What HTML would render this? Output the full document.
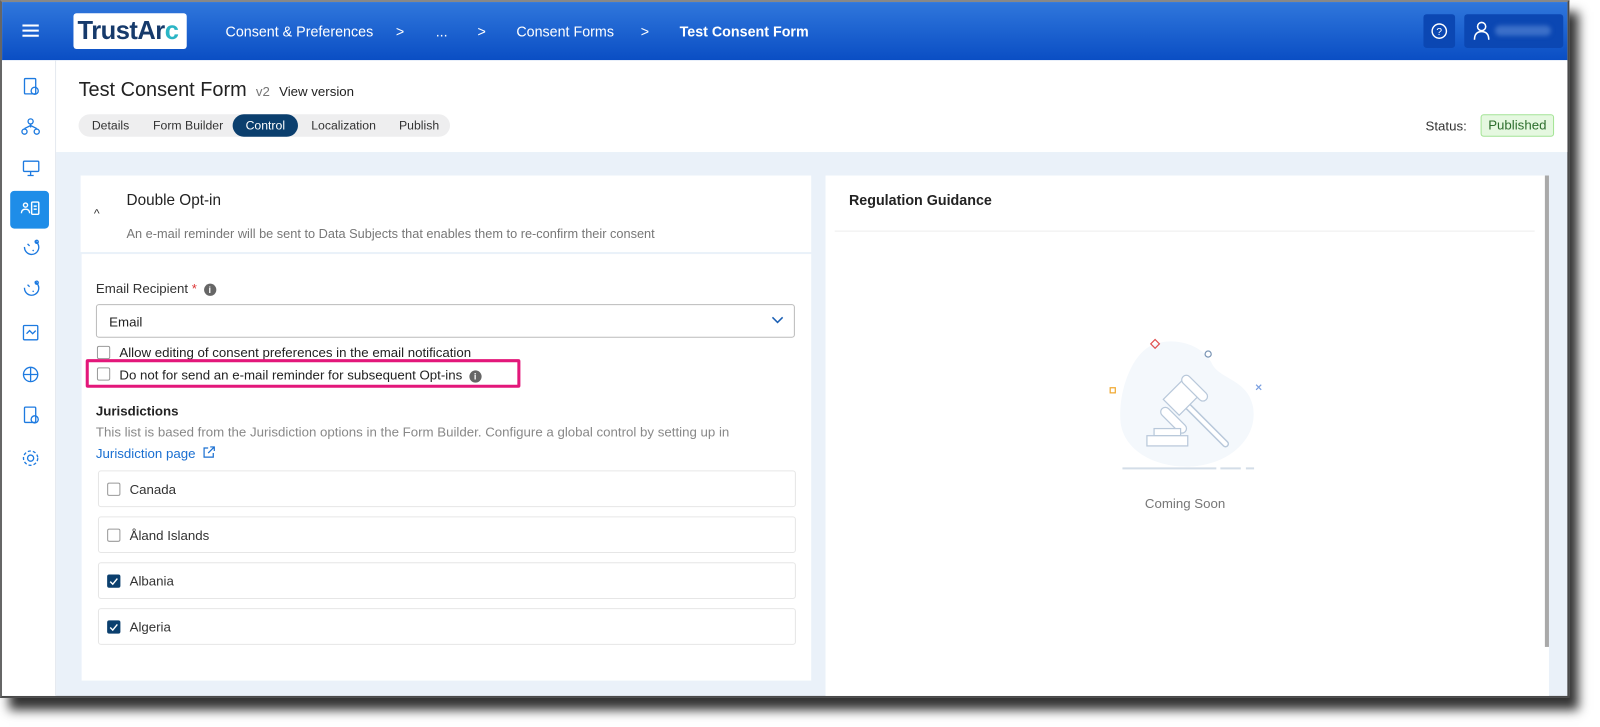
<!DOCTYPE html>
<html><head><meta charset="utf-8"><style>
*{box-sizing:border-box;margin:0;padding:0}
body{width:1600px;height:727px;background:#fff;font-family:"Liberation Sans",sans-serif;position:relative;overflow:hidden;color:#222}
#wrap{position:absolute;left:0;top:0;width:1568px;height:712px;transform:scale(1.0204);transform-origin:0 0}
.abs{position:absolute}
.win{left:0;top:0;width:1538px;height:684px;border:2px solid #4a4a4a;border-top-color:#888;border-left-color:#666;background:#eaf1f9;box-shadow:9px 12px 10px rgba(0,0,0,.8);overflow:hidden}
.hdr{left:0;top:0;width:1536px;height:57px;background:linear-gradient(#3077dc,#0a4ec4)}
.bc{color:#fff;font-size:14px;top:21px}
.side{left:0;top:57px;width:53px;height:630px;background:#fff;border-right:1px solid #e3e8ef}
.ph{left:53px;top:57px;width:1483px;height:90px;background:#fff}
.card{background:#fff}
.cb{width:13px;height:13px;border:1px solid #999;border-radius:2px;background:#fff}
.cbk{width:13px;height:13px;border-radius:2px;background:#0b3f6e}
.li{left:94px;width:684px;height:36px;border:1px solid #e6e6e6;border-radius:3px;background:#fff}
.li span{position:absolute;left:30px;top:10px;font-size:13px;color:#333}
.li .cb,.li .cbk{position:absolute;left:8px;top:11px}
</style></head><body>
<div id="wrap">
<div class="abs win">
 <div class="abs hdr"></div>
 <div class="abs" style="left:20px;top:22px;width:16px;height:2px;background:#fff;box-shadow:0 5px 0 #fff,0 10px 0 #fff"></div>
 <div class="abs" style="left:70px;top:11px;width:111px;height:35px;background:#fff;border-radius:3px;font-size:25px;font-weight:bold;color:#163a6b;padding:3px 0 0 4px;letter-spacing:-0.5px">TrustAr<span style="color:#2bb5c5">c</span></div>
 <div class="abs bc" style="left:219px">Consent &amp; Preferences</div>
 <div class="abs bc" style="left:386px">&gt;</div>
 <div class="abs bc" style="left:425px">...</div>
 <div class="abs bc" style="left:466px">&gt;</div>
 <div class="abs bc" style="left:504px">Consent Forms</div>
 <div class="abs bc" style="left:626px">&gt;</div>
 <div class="abs bc" style="left:664px;font-weight:bold">Test Consent Form</div>
 <div class="abs" style="left:1393px;top:12px;width:31px;height:33px;background:#0b47b3;border-radius:3px"><svg width="31" height="33"><circle cx="15.5" cy="16.5" r="7" fill="none" stroke="#fff" stroke-width="1.4"/><text x="15.5" y="20.5" fill="#fff" font-size="10" text-anchor="middle" font-family="Liberation Sans">?</text></svg></div>
 <div class="abs" style="left:1433px;top:12px;width:97px;height:33px;background:#0b47b3;border-radius:3px"><svg width="40" height="33"><circle cx="17" cy="12" r="4" fill="none" stroke="#fff" stroke-width="1.5"/><path d="M10 25 Q10 17 17 17 Q24 17 24 25" fill="none" stroke="#fff" stroke-width="1.5"/></svg><div class="abs" style="left:30px;top:11px;width:55px;height:10px;background:#3b6fc8;border-radius:5px;filter:blur(2px)"></div></div>
 <div class="abs side"></div>
 <svg class="abs" style="left:0;top:57px" width="53" height="420" fill="none" stroke="#1d7ae0" stroke-width="1.3">
  <rect x="22" y="18" width="11" height="15" rx="1"/><circle cx="32" cy="30" r="3.5"/>
  <circle cx="28" cy="60" r="2.5"/><circle cx="22" cy="70" r="2.5"/><circle cx="34" cy="70" r="2.5"/><path d="M28 62v4M22 67l6-3 6 3"/>
  <rect x="21" y="99" width="15" height="10" rx="1"/><path d="M28 109v4M25 113h6"/>
  <path d="M22 183a7 7 0 1 0 10-6M25 180l2 2M30 186l1 1"/><circle cx="34" cy="178" r="1.5"/>
  <path d="M22 223a7 7 0 1 0 10-6M25 220l2 2M30 226l1 1"/><circle cx="34" cy="218" r="1.5"/>
  <rect x="21" y="260" width="14" height="14" rx="1"/><path d="M24 268l3-3 3 3 3-3"/>
  <circle cx="28" cy="308" r="7"/><path d="M21 308h14M28 301v14"/>
  <rect x="22" y="340" width="11" height="15" rx="1"/><circle cx="32" cy="352" r="3.5"/>
  <circle cx="28" cy="390" r="3"/><circle cx="28" cy="390" r="7" stroke-dasharray="3 2"/>
 </svg>
 <div class="abs" style="left:8px;top:185px;width:38px;height:37px;background:#1e8de8;border-radius:4px"><svg width="38" height="37" fill="none" stroke="#fff" stroke-width="1.4"><circle cx="15" cy="14" r="2"/><path d="M11 22q0-4 4-4t4 4"/><rect x="21" y="11" width="7" height="12" rx="1"/><path d="M23 15h3M23 18h3"/></svg></div>
 <div class="abs ph"></div>
 <div class="abs" style="left:75px;top:75px;font-size:19.5px;color:#222">Test Consent Form <span style="font-size:13px;color:#777">&nbsp;v2</span> <span style="font-size:13px;color:#222">&nbsp;View version</span></div>
 <div class="abs" style="left:75px;top:110px;width:364px;height:22px;background:#eeeeef;border-radius:11px;font-size:12px;color:#333">
  <span class="abs" style="left:13px;top:4px">Details</span>
  <span class="abs" style="left:73px;top:4px">Form Builder</span>
  <span class="abs" style="left:151px;top:0;width:64px;height:22px;background:#0b3f6e;color:#fff;border-radius:11px;text-align:center;line-height:22px">Control</span>
  <span class="abs" style="left:228px;top:4px">Localization</span>
  <span class="abs" style="left:314px;top:4px">Publish</span>
 </div>
 <div class="abs" style="left:1395px;top:114px;font-size:13px;color:#333">Status:</div>
 <div class="abs" style="left:1449px;top:110px;width:72px;height:22px;background:#e5f8e0;border:1px solid #a4e495;border-radius:3px;font-size:13px;color:#2d6e2d;text-align:center;line-height:20px">Published</div>

 <div class="abs card" style="left:77px;top:170px;width:716px;height:75px"></div>
 <div class="abs" style="left:90px;top:200px;font-size:12px;color:#333">&#94;</div>
 <div class="abs" style="left:122px;top:186px;font-size:15px;color:#222">Double Opt-in</div>
 <div class="abs" style="left:122px;top:220px;font-size:12.5px;color:#777">An e-mail reminder will be sent to Data Subjects that enables them to re-confirm their consent</div>
 <div class="abs card" style="left:78px;top:247px;width:715px;height:418px"></div>
 <div class="abs" style="left:92px;top:273px;font-size:13px;color:#333">Email Recipient <span style="color:#d33">*</span> <span style="display:inline-block;width:12px;height:12px;border-radius:50%;background:#666;color:#fff;font-size:9px;text-align:center;line-height:12px;font-weight:bold;margin-left:3px">i</span></div>
 <div class="abs" style="left:92px;top:296px;width:685px;height:33px;border:1px solid #bbb;border-radius:3px;font-size:13px;color:#222;padding:9px 12px">Email<svg class="abs" style="right:10px;top:11px" width="12" height="8"><path d="M1 1l5 5 5-5" fill="none" stroke="#1a5fb4" stroke-width="1.5"/></svg></div>
 <div class="abs cb" style="left:93px;top:337px"></div>
 <div class="abs" style="left:115px;top:336px;font-size:13px;color:#222">Allow editing of consent preferences in the email notification</div>
 <div class="abs" style="left:82px;top:350px;width:426px;height:28px;border:3px solid #e3177a;border-radius:2px"></div>
 <div class="abs cb" style="left:93px;top:358px"></div>
 <div class="abs" style="left:115px;top:358px;font-size:13px;color:#222">Do not for send an e-mail reminder for subsequent Opt-ins <span style="display:inline-block;width:12px;height:12px;border-radius:50%;background:#666;color:#fff;font-size:9px;text-align:center;line-height:12px;font-weight:bold;margin-left:3px">i</span></div>
 <div class="abs" style="left:92px;top:393px;font-size:13px;font-weight:bold;color:#222">Jurisdictions</div>
 <div class="abs" style="left:92px;top:414px;font-size:13px;color:#888">This list is based from the Jurisdiction options in the Form Builder. Configure a global control by setting up in</div>
 <div class="abs" style="left:92px;top:435px;font-size:13px;color:#1a6fd1">Jurisdiction page <svg width="12" height="12" style="margin-left:4px"><path d="M5 2H1v9h9V7M7 1h4v4M11 1L5 7" fill="none" stroke="#1a6fd1" stroke-width="1.2"/></svg></div>
 <div class="abs li" style="top:459px"><div class="cb"></div><span>Canada</span></div>
 <div class="abs li" style="top:504px"><div class="cb"></div><span>Åland Islands</span></div>
 <div class="abs li" style="top:549px"><div class="cbk"><svg width="13" height="13"><path d="M3 7l2.5 2.5L10 4" fill="none" stroke="#fff" stroke-width="1.4"/></svg></div><span>Albania</span></div>
 <div class="abs li" style="top:594px"><div class="cbk"><svg width="13" height="13"><path d="M3 7l2.5 2.5L10 4" fill="none" stroke="#fff" stroke-width="1.4"/></svg></div><span>Algeria</span></div>

 <div class="abs card" style="left:807px;top:170px;width:709px;height:520px"></div>
 <div class="abs" style="left:830px;top:186px;font-size:14px;font-weight:bold;color:#222">Regulation Guidance</div>
 <div class="abs" style="left:816px;top:224px;width:686px;height:1px;background:#eee"></div>
 <div class="abs" style="left:1512px;top:170px;width:4px;height:462px;background:#a9a9a9"></div>
 <svg class="abs" style="left:1080px;top:325px" width="170" height="140" fill="none">
  <path d="M50 10c25-8 50 5 56 20 8 15 35 15 40 42 5 30-22 55-58 58-36 3-70-15-72-45C14 55 28 17 50 10z" fill="#f4f8fc"/>
  <rect x="47" y="7" width="6" height="6" transform="rotate(45 50 10)" stroke="#e05050" stroke-width="1.2"/>
  <circle cx="102" cy="20" r="3" stroke="#7a95b5" stroke-width="1.2"/>
  <rect x="6" y="53" width="5" height="5" stroke="#f0a830" stroke-width="1.2"/>
  <path d="M149 50l5 5M154 50l-5 5" stroke="#7a9fe0" stroke-width="1.2"/>
  <path d="M79 68l40 40" stroke="#b8c8da" stroke-width="7" stroke-linecap="round"/>
  <path d="M79 68l40 40" stroke="#fff" stroke-width="4" stroke-linecap="round"/>
  <rect x="64" y="50" width="22" height="26" transform="rotate(45 75 63)" fill="#fff" stroke="#b8c8da" stroke-width="1.2"/>
  <rect x="56" y="72" width="32" height="9" rx="4.5" transform="rotate(45 60 76)" fill="#fff" stroke="#b8c8da" stroke-width="1.2"/>
  <rect x="76" y="42" width="32" height="9" rx="4.5" transform="rotate(45 82 46)" fill="#fff" stroke="#b8c8da" stroke-width="1.2"/>
  <rect x="49" y="93" width="26" height="7" fill="#fff" stroke="#b8c8da" stroke-width="1.2"/>
  <rect x="42" y="100" width="40" height="10" fill="#fff" stroke="#b8c8da" stroke-width="1.2"/>
  <path d="M18 132h92M114 132h20M139 132h8" stroke="#d3dde8" stroke-width="2"/>
 </svg>
 <div class="abs" style="left:1120px;top:484px;font-size:13px;color:#777">Coming Soon</div>
</div>
</div>
</body></html>
